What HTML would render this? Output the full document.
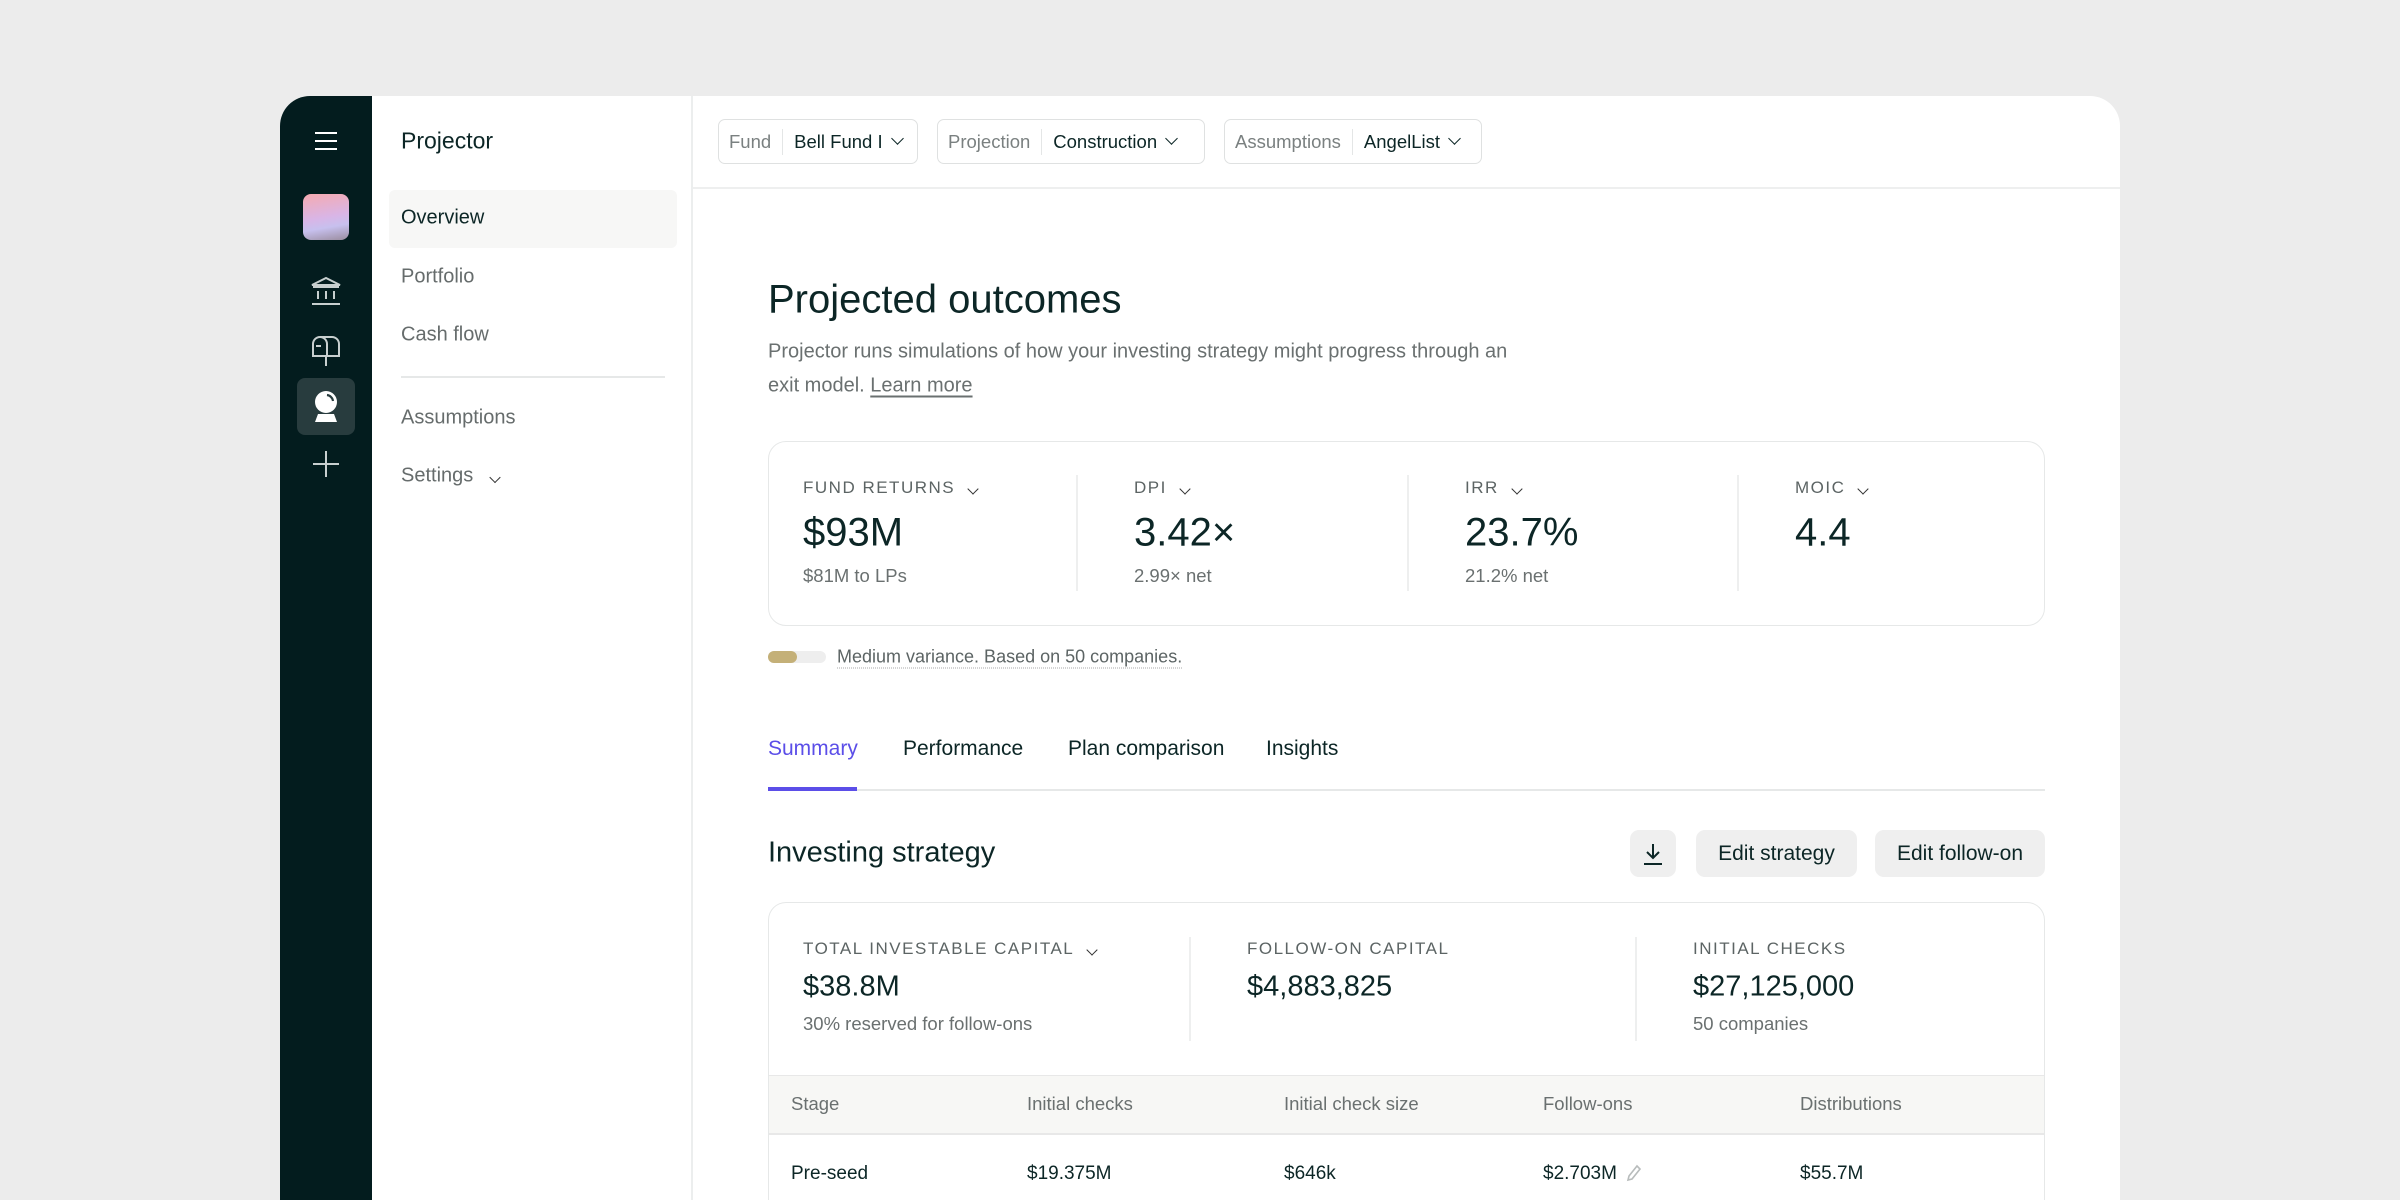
<!DOCTYPE html>
<html><head><meta charset="utf-8"><style>
*{box-sizing:border-box;margin:0;padding:0}
body{width:2400px;height:1200px;background:#ececec;font-family:"Liberation Sans",sans-serif;color:#0c2626;position:relative;overflow:hidden}
.a{position:absolute}
.card{left:280px;top:96px;width:1840px;height:1104px;background:#fff;border-radius:30px 30px 0 0;overflow:hidden}
.side{left:0;top:0;width:92px;height:1104px;background:#031c1e}
.nav{left:92px;top:0;width:321px;height:1104px;border-right:2px solid #eceeee}
.t{position:absolute;white-space:nowrap;transform:translateY(-50%)}
.navi{font-size:20px;color:#666c6c}
.sel{position:absolute;top:23px;height:45px;border:1.5px solid #dfe1e1;border-radius:7px;font-size:18.5px;display:flex;align-items:center;padding:0 10px;white-space:nowrap}
.sel .l{color:#7a8080;padding-right:11px;border-right:1.5px solid #e4e6e6;margin-right:11px;line-height:26px}
.sel .v{color:#0c2626}
.chev{display:inline-block;width:9px;height:9px;border-right:1.6px solid currentColor;border-bottom:1.6px solid currentColor;transform:rotate(45deg);margin-left:10px;margin-top:-6px}
.lab{font-size:17px;letter-spacing:1.5px;color:#5c6464}
.lab .chev{width:8px;height:8px;margin-left:14px;color:#333}
.val{font-size:40px;color:#0c2626}
.sub{font-size:18.5px;color:#6a7070}
.btn{position:absolute;top:734px;height:47px;background:#efefef;border-radius:9px;font-size:21px;display:flex;align-items:center;justify-content:center;color:#0c2626}
</style></head><body>
<div class="a card">
 <div class="a side">
  <svg class="a" style="left:34px;top:33px" width="24" height="24" viewBox="0 0 24 24" stroke="#fff" stroke-width="2" fill="none"><path d="M1 4h22M1 12h22M1 20h22"/></svg>
  <div class="a" style="left:23px;top:98px;width:46px;height:46px;border-radius:8px;background:linear-gradient(170deg,#f5aab0 0%,#d9b5e6 50%,#c7c0ee 70%,#9a8c9e 100%)"></div>
  <svg class="a" style="left:30px;top:180px" width="32" height="30" viewBox="0 0 32 30" stroke="#c8cfcf" stroke-width="2" fill="none"><path d="M2 9L16 2l14 7zM3 11h26M8 15v8M16 15v8M24 15v8M2 28h28"/></svg>
  <svg class="a" style="left:31px;top:238px" width="30" height="34" viewBox="0 0 30 34" stroke="#c8cfcf" stroke-width="2" fill="none"><path d="M9 3h12a7 7 0 0 1 7 7v12H2V10a7 7 0 0 1 7-7zM9 3a7 7 0 0 1 7 7v12M15 22v10M5 12h5"/></svg>
  <div class="a" style="left:17px;top:282px;width:58px;height:57px;border-radius:8px;background:#283c3e"></div>
  <svg class="a" style="left:30px;top:294px" width="32" height="34" viewBox="0 0 32 34" fill="#fff"><circle cx="16" cy="12" r="11"/><path d="M5 32l3-8h16l3 8z"/><path d="M17 5a7 7 0 0 1 6 6" stroke="#283c3e" stroke-width="2.2" fill="none"/></svg>
  <svg class="a" style="left:32px;top:354px" width="28" height="28" viewBox="0 0 28 28" stroke="#c8cfcf" stroke-width="2"><path d="M14 1v26M1 14h26"/></svg>
 </div>
 <div class="a nav">
  <div class="t" style="left:29px;top:45px;font-size:23px;color:#0c2626">Projector</div>
  <div class="a" style="left:17px;top:94px;width:288px;height:58px;background:#f7f7f6;border-radius:6px"></div>
  <div class="t" style="left:29px;top:122px;font-size:20px;color:#0c2626">Overview</div>
  <div class="t navi" style="left:29px;top:181px">Portfolio</div>
  <div class="t navi" style="left:29px;top:239px">Cash flow</div>
  <div class="a" style="left:29px;top:280px;width:264px;height:2px;background:#e6e8e8"></div>
  <div class="t navi" style="left:29px;top:322px">Assumptions</div>
  <div class="t navi" style="left:29px;top:380px">Settings<span class="chev" style="width:8px;height:8px;margin-left:18px;color:#333"></span></div>
 </div>
 <div class="a" style="left:413px;top:91px;width:1427px;height:2px;background:#eeefef"></div>
 <div class="sel" style="left:438px;width:200px"><span class="l">Fund</span><span class="v">Bell Fund I</span><span class="chev"></span></div>
 <div class="sel" style="left:657px;width:268px"><span class="l">Projection</span><span class="v">Construction</span><span class="chev"></span></div>
 <div class="sel" style="left:944px;width:258px"><span class="l">Assumptions</span><span class="v">AngelList</span><span class="chev"></span></div>

 <div class="t" style="left:488px;top:204px;font-size:40px">Projected outcomes</div>
 <div class="t" style="left:488px;top:256px;font-size:20px;color:#6a7070">Projector runs simulations of how your investing strategy might progress through an</div>
 <div class="t" style="left:488px;top:290px;font-size:20px;color:#6a7070">exit model. <span style="text-decoration:underline;text-underline-offset:4px">Learn more</span></div>

 <div class="a" style="left:488px;top:345px;width:1277px;height:185px;border:1.5px solid #e6e8e8;border-radius:18px"></div>
 <div class="a" style="left:796px;top:379px;width:2px;height:116px;background:#eeefef"></div>
 <div class="a" style="left:1127px;top:379px;width:2px;height:116px;background:#eeefef"></div>
 <div class="a" style="left:1457px;top:379px;width:2px;height:116px;background:#eeefef"></div>
 <div class="t lab" style="left:523px;top:392px">FUND RETURNS<span class="chev"></span></div>
 <div class="t lab" style="left:854px;top:392px">DPI<span class="chev"></span></div>
 <div class="t lab" style="left:1185px;top:392px">IRR<span class="chev"></span></div>
 <div class="t lab" style="left:1515px;top:392px">MOIC<span class="chev"></span></div>
 <div class="t val" style="left:523px;top:437px">$93M</div>
 <div class="t val" style="left:854px;top:437px">3.42×</div>
 <div class="t val" style="left:1185px;top:437px">23.7%</div>
 <div class="t val" style="left:1515px;top:437px">4.4</div>
 <div class="t sub" style="left:523px;top:480px">$81M to LPs</div>
 <div class="t sub" style="left:854px;top:480px">2.99× net</div>
 <div class="t sub" style="left:1185px;top:480px">21.2% net</div>

 <div class="a" style="left:488px;top:555px;width:58px;height:12px;border-radius:6px;background:#eeeeee"></div>
 <div class="a" style="left:488px;top:555px;width:29px;height:12px;border-radius:6px;background:#c4b078"></div>
 <div class="t" style="left:557px;top:561px;font-size:18px;color:#5c6464;border-bottom:1.5px dotted #aaa;line-height:22px">Medium variance. Based on 50 companies.</div>

 <div class="t" style="left:488px;top:653px;font-size:21px;color:#5b4ee8">Summary</div>
 <div class="t" style="left:623px;top:653px;font-size:21px">Performance</div>
 <div class="t" style="left:788px;top:653px;font-size:21px">Plan comparison</div>
 <div class="t" style="left:986px;top:653px;font-size:21px">Insights</div>
 <div class="a" style="left:488px;top:693px;width:1277px;height:2px;background:#e6e8e8"></div>
 <div class="a" style="left:488px;top:691px;width:89px;height:4px;background:#5b4ee8"></div>

 <div class="t" style="left:488px;top:757px;font-size:29px">Investing strategy</div>
 <div class="btn" style="left:1350px;width:46px"><svg width="22" height="24" viewBox="0 0 22 24" stroke="#0c2626" stroke-width="2" fill="none"><path d="M11 2v14M5 10l6 6 6-6M2 22h18"/></svg></div>
 <div class="btn" style="left:1416px;width:161px">Edit strategy</div>
 <div class="btn" style="left:1595px;width:170px">Edit follow-on</div>

 <div class="a" style="left:488px;top:806px;width:1277px;height:298px;border:1.5px solid #e6e8e8;border-bottom:none;border-radius:18px 18px 0 0;overflow:hidden">
  <div class="a" style="left:0;top:172px;width:1277px;height:60px;background:#f7f7f5;border-top:1.5px solid #e8e8e8;border-bottom:2px solid #e8e8e8"></div>
 </div>
 <div class="a" style="left:909px;top:841px;width:2px;height:104px;background:#eeefef"></div>
 <div class="a" style="left:1355px;top:841px;width:2px;height:104px;background:#eeefef"></div>
 <div class="t lab" style="left:523px;top:853px">TOTAL INVESTABLE CAPITAL<span class="chev"></span></div>
 <div class="t lab" style="left:967px;top:853px">FOLLOW-ON CAPITAL</div>
 <div class="t lab" style="left:1413px;top:853px">INITIAL CHECKS</div>
 <div class="t" style="left:523px;top:891px;font-size:29px">$38.8M</div>
 <div class="t" style="left:967px;top:891px;font-size:29px">$4,883,825</div>
 <div class="t" style="left:1413px;top:891px;font-size:29px">$27,125,000</div>
 <div class="t sub" style="left:523px;top:928px">30% reserved for follow-ons</div>
 <div class="t sub" style="left:1413px;top:928px">50 companies</div>

 <div class="t sub" style="left:511px;top:1008px">Stage</div>
 <div class="t sub" style="left:747px;top:1008px">Initial checks</div>
 <div class="t sub" style="left:1004px;top:1008px">Initial check size</div>
 <div class="t sub" style="left:1263px;top:1008px">Follow-ons</div>
 <div class="t sub" style="left:1520px;top:1008px">Distributions</div>
 <div class="t" style="left:511px;top:1078px;font-size:19px">Pre-seed</div>
 <div class="t" style="left:747px;top:1078px;font-size:19px">$19.375M</div>
 <div class="t" style="left:1004px;top:1078px;font-size:19px">$646k</div>
 <div class="t" style="left:1263px;top:1078px;font-size:19px">$2.703M <svg width="16" height="18" viewBox="0 0 16 18" style="vertical-align:-3px;margin-left:4px" stroke="#b8bcbc" stroke-width="1.6" fill="none"><path d="M11 2l3 3-8 10-4 1 1-4z"/></svg></div>
 <div class="t" style="left:1520px;top:1078px;font-size:19px">$55.7M</div>
</div>
</body></html>
